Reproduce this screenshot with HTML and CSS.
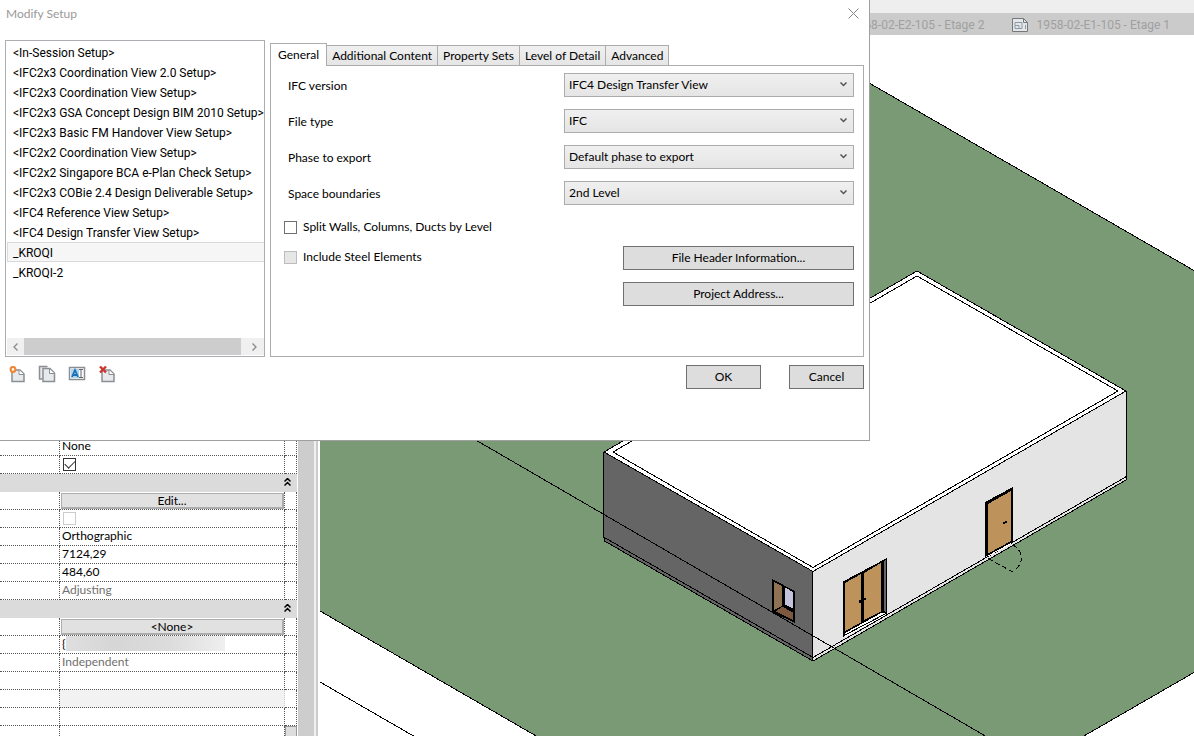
FILE: index.html
```html
<!DOCTYPE html>
<html lang="en">
<head>
  <meta charset="UTF-8">
  <title>Modify Setup</title>
  <link rel="stylesheet" href="styles.css">
</head>
<body>
  <div class="ribbon"></div>

  <nav class="view-tabs">
    <button class="view-tab">
      <svg width="16" height="14" viewBox="0 0 16 14"><path d="M.5.5h11l4 4v9H.5z" fill="#e4e7ea" stroke="#777"/><path d="M11.500.5v4h4" fill="none" stroke="#777"/><path d="M3 4.500h7v6H7v-3H3zM3 7.500v3h4M13.500 7v4" fill="none" stroke="#8d99a5"/></svg>
      <span>1958-02-E2-105 - Etage 2</span>
    </button>
    <button class="view-tab">
      <svg width="16" height="14" viewBox="0 0 16 14"><path d="M.5.5h11l4 4v9H.5z" fill="#e4e7ea" stroke="#777"/><path d="M11.500.5v4h4" fill="none" stroke="#777"/><path d="M3 4.500h7v6H7v-3H3zM3 7.500v3h4M13.500 7v4" fill="none" stroke="#8d99a5"/></svg>
      <span>1958-02-E1-105 - Etage 1</span>
    </button>
  </nav>

  <main class="workspace">
    <aside class="palette">
      <table class="properties">
        <colgroup><col class="col-name"><col class="col-value"><col class="col-more"></colgroup>
        <tr><td></td><td>None</td><td></td></tr>
        <tr><td></td><td><input type="checkbox" class="tick" aria-label="Crop view" checked></td><td></td></tr>
        <tr class="group"><td colspan="3"><svg width="7" height="8" viewBox="0 0 7 8"><path d="M.5 3.500l3-3 3 3M.5 7.500l3-3 3 3" fill="none" stroke="#000" stroke-width="1.500"/></svg></td></tr>
        <tr><td></td><td class="cell-button"><button>Edit...</button></td><td></td></tr>
        <tr><td></td><td><input type="checkbox" class="tick" aria-label="Locked orientation" disabled></td><td></td></tr>
        <tr><td></td><td>Orthographic</td><td></td></tr>
        <tr><td></td><td>7124,29</td><td></td></tr>
        <tr><td></td><td>484,60</td><td></td></tr>
        <tr><td></td><td class="muted">Adjusting</td><td></td></tr>
        <tr class="group"><td colspan="3"><svg width="7" height="8" viewBox="0 0 7 8"><path d="M.5 3.500l3-3 3 3M.5 7.500l3-3 3 3" fill="none" stroke="#000" stroke-width="1.500"/></svg></td></tr>
        <tr><td></td><td class="cell-button"><button>&lt;None&gt;</button></td><td></td></tr>
        <tr><td></td><td><div class="masked">{<span class="smudge"></span></div></td><td></td></tr>
        <tr><td></td><td class="muted">Independent</td><td></td></tr>
        <tr><td></td><td></td><td></td></tr>
        <tr><td></td><td class="cell-smudge"></td><td></td></tr>
        <tr><td></td><td></td><td></td></tr>
        <tr><td></td><td></td><td class="cell-corner"></td></tr>
      </table>
      <div class="gutter"></div>
      <div class="splitter"></div>
    </aside>

    <section class="view">
      <svg class="scene" viewBox="320 35 874 701" preserveAspectRatio="xMinYMin slice" shape-rendering="crispEdges">
        <!-- site -->
        <path d="M320 -235L1200 274V669L1070 744H550L320 611z" fill="#799a75"/>
        <g fill="none" stroke="#000">
          <path d="M786 35L1200 274"/>
          <path d="M320 611L550 744"/>
          <path d="M1070 744L1200 669"/>
          <path d="M320 682L430 745.500"/>
        </g>
        <!-- walls -->
        <path d="M604 452L813 571V661L605 541.500V537H604z" fill="#656565"/>
        <path d="M813 571L1126.500 391V480L813 661z" fill="#e4e4e4"/>
        <path d="M604 452L917 271L1126 391L813 571.500z" fill="#fff" stroke="#000"/>
        <path d="M613 452L917 276L1118 391L813 567.500z" fill="#fff" stroke="#000"/>
        <path d="M603.500 452V537L813 657.500L1126.500 476.500V391M604.500 537V541L813 661L1126 480V477M812.500 571V661" fill="none" stroke="#000"/>
        <!-- window -->
        <path d="M772 579L795 591V623L772 612z" fill="#000"/>
        <path d="M774 582L782 586V606L774 610z" fill="#8f7153"/>
        <path d="M785 587.500L793 592V608.500L785 604.500z" fill="#c3c3de"/>
        <path d="M776 611.500L782 606.500L793 612.500V620z" fill="#7c5840"/>
        <!-- double door -->
        <path d="M843 581.500L887 558V613.500L843 637z" fill="#000"/>
        <path d="M845 583L861 574V622.500L845 631z" fill="#be935b"/>
        <path d="M864 573L881 563V611.500L864 620z" fill="#be935b"/>
        <path d="M883.500 561L885.500 560V612L883.500 611z" fill="#666"/>
        <path d="M845 633L882 612.500L886 613V615L845 637z" fill="#fff"/>
        <path d="M845 635L886 613.500" stroke="#000"/>
        <path d="M859 600h5v3h-5zM862 598h4v2h-4z" fill="#000"/>
        <!-- single door -->
        <path d="M985 502L1013 487V543L985 557z" fill="#000"/>
        <path d="M988 504L1011 491V541L988 553.500z" fill="#be935b"/>
        <path d="M988 556L1011 543.500" stroke="#fff"/>
        <path d="M1003 523L1007 522" stroke="#000" stroke-width="2"/>
        <path d="M988 558.500L1012 571.500Q1022 566 1021.500 557Q1020 549 1013 545" fill="none" stroke="#000" stroke-dasharray="5 3"/>
        <!-- section line -->
        <path d="M400 396L1000 744.500" stroke="#000"/>
      </svg>
    </section>
  </main>

  <form class="dialog" role="dialog" aria-labelledby="dialogTitle">
    <header class="title-bar">
      <h1 id="dialogTitle">Modify Setup</h1>
      <button type="button" class="close" aria-label="Close">
        <svg width="11" height="11" viewBox="0 0 11 11"><path d="M.5.5l10 10M10.500.5l-10 10" stroke="#858585" fill="none"/></svg>
      </button>
    </header>

    <div class="dialog-body">
      <div class="setups">
        <div class="setup-box">
          <ul class="setup-list" role="listbox" aria-label="Setups">
            <li role="option">&lt;In-Session Setup&gt;</li>
            <li role="option">&lt;IFC2x3 Coordination View 2.0 Setup&gt;</li>
            <li role="option">&lt;IFC2x3 Coordination View Setup&gt;</li>
            <li role="option">&lt;IFC2x3 GSA Concept Design BIM 2010 Setup&gt;</li>
            <li role="option">&lt;IFC2x3 Basic FM Handover View Setup&gt;</li>
            <li role="option">&lt;IFC2x2 Coordination View Setup&gt;</li>
            <li role="option">&lt;IFC2x2 Singapore BCA e-Plan Check Setup&gt;</li>
            <li role="option">&lt;IFC2x3 COBie 2.4 Design Deliverable Setup&gt;</li>
            <li role="option">&lt;IFC4 Reference View Setup&gt;</li>
            <li role="option">&lt;IFC4 Design Transfer View Setup&gt;</li>
            <li role="option" class="selected" aria-selected="true">_KROQI</li>
            <li role="option">_KROQI-2</li>
          </ul>
          <div class="scrollbar">
            <button type="button" aria-label="Scroll left"><svg width="5" height="8" viewBox="0 0 5 8"><path d="M4.500.5L1 4l3.500 3.500" fill="none" stroke="#8a8a8a" stroke-width="1.300"/></svg></button>
            <div class="thumb"></div>
            <button type="button" aria-label="Scroll right"><svg width="5" height="8" viewBox="0 0 5 8"><path d="M.5.5L4 4 .5 7.500" fill="none" stroke="#8a8a8a" stroke-width="1.300"/></svg></button>
          </div>
        </div>
        <div class="tools">
          <button type="button" aria-label="New setup">
            <svg width="18" height="18" viewBox="0 0 18 18"><path d="M4 5h8l4 4v7.500H4z" fill="#e8e9ec" stroke="#8b8f94" stroke-width="1.500"/><path d="M11 5v4.500h5" fill="#fff" stroke="#8b8f94"/><circle cx="5" cy="4.500" r="2.400" fill="#fff3d8" stroke="#ee8534" stroke-width="2"/></svg>
          </button>
          <button type="button" aria-label="Duplicate setup">
            <svg width="18" height="18" viewBox="0 0 18 18"><path d="M4.500 14H1.500V1.500h8" fill="#e8e9ec" stroke="#8b8f94" stroke-width="1.500"/><path d="M5 3.500h7l4.500 4.500v8.500H5z" fill="#e8e9ec" stroke="#8b8f94" stroke-width="1.500"/><path d="M11.500 4v4.500h5" fill="#fff" stroke="#8b8f94"/></svg>
          </button>
          <button type="button" aria-label="Rename setup">
            <svg width="18" height="18" viewBox="0 0 18 18"><path d="M1.500 2.500h15v12h-15z" fill="#fff" stroke="#8b8f94" stroke-width="1.500"/><path d="M3 4h8v9H3z" fill="#abd6f0"/><path d="M4 12l3-7 3 7M5 10h4" fill="none" stroke="#1e70b7" stroke-width="1.800"/><path d="M11 4.500h4M11 12.500h4M13 4.500v8" fill="none" stroke="#666"/></svg>
          </button>
          <button type="button" aria-label="Delete setup">
            <svg width="18" height="18" viewBox="0 0 18 18"><path d="M4 5h8l4 4v7.500H4z" fill="#e8e9ec" stroke="#8b8f94" stroke-width="1.500"/><path d="M11 5v4.500h5" fill="#fff" stroke="#8b8f94"/><path d="M2 1.500l6 6M8 1.500l-6 6" stroke="#cb352e" stroke-width="2.400"/></svg>
          </button>
        </div>
      </div>

      <div class="settings">
        <div class="tabs" role="tablist">
          <button type="button" role="tab" class="tab active" aria-selected="true">General</button>
          <button type="button" role="tab" class="tab">Additional Content</button>
          <button type="button" role="tab" class="tab">Property Sets</button>
          <button type="button" role="tab" class="tab">Level of Detail</button>
          <button type="button" role="tab" class="tab">Advanced</button>
        </div>

        <div class="tab-page">
          <div class="field">
            <label for="ifcVersion">IFC version</label>
            <div class="select">
              <select id="ifcVersion"><option>IFC4 Design Transfer View</option></select>
              <svg width="7" height="5" viewBox="0 0 7 5"><path d="M.5.5l3 3 3-3" fill="none" stroke="#555" stroke-width="1.500"/></svg>
            </div>
          </div>
          <div class="field">
            <label for="fileType">File type</label>
            <div class="select">
              <select id="fileType"><option>IFC</option></select>
              <svg width="7" height="5" viewBox="0 0 7 5"><path d="M.5.5l3 3 3-3" fill="none" stroke="#555" stroke-width="1.500"/></svg>
            </div>
          </div>
          <div class="field">
            <label for="phase">Phase to export</label>
            <div class="select">
              <select id="phase"><option>Default phase to export</option></select>
              <svg width="7" height="5" viewBox="0 0 7 5"><path d="M.5.5l3 3 3-3" fill="none" stroke="#555" stroke-width="1.500"/></svg>
            </div>
          </div>
          <div class="field">
            <label for="boundaries">Space boundaries</label>
            <div class="select">
              <select id="boundaries"><option>2nd Level</option></select>
              <svg width="7" height="5" viewBox="0 0 7 5"><path d="M.5.5l3 3 3-3" fill="none" stroke="#555" stroke-width="1.500"/></svg>
            </div>
          </div>

          <div class="options">
            <div class="checks">
              <label class="check"><input type="checkbox">Split Walls, Columns, Ducts by Level</label>
              <label class="check"><input type="checkbox" disabled>Include Steel Elements</label>
            </div>
            <div class="links">
              <button type="button" class="button">File Header Information...</button>
              <button type="button" class="button">Project Address...</button>
            </div>
          </div>
        </div>

        <div class="actions">
          <button type="submit" class="button">OK</button>
          <button type="button" class="button">Cancel</button>
        </div>
      </div>
    </div>
  </form>
</body>
</html>
```
FILE: styles.css
```css
* {
  box-sizing: border-box;
}

body {
  margin: 0;
  height: 100vh;
  display: flex;
  flex-direction: column;
  overflow: hidden;
  position: relative;
  background: #fff;
  color: #000;
  font-family: "Segoe UI", Lato, sans-serif;
  font-size: 12px;
  line-height: 16px;
}

button,
select,
input {
  font: inherit;
  color: inherit;
  margin: 0;
}

button {
  padding: 0;
  border: none;
  background: none;
}

svg {
  display: block;
}

/* application behind the dialog */
.ribbon {
  height: 13px;
  background: #eee;
}

.view-tabs {
  height: 22px;
  flex: none;
  display: flex;
  justify-content: flex-end;
  gap: 28px;
  padding: 2px 24px 0 0;
  background: #cbcbcb;
  font-family: "Segoe UI", Roboto, sans-serif;
}

.view-tab {
  display: flex;
  align-items: center;
  gap: 8px;
  color: #a0a0a0;
  white-space: nowrap;
}

.workspace {
  flex: 1;
  min-height: 0;
  display: flex;
}

.palette {
  display: flex;
  flex: none;
  width: 320px;
  overflow: hidden;
}

.properties {
  width: 297px;
  margin-top: 403px;
  table-layout: fixed;
  border-spacing: 0;
  align-self: flex-start;
}

.col-name {
  width: 60px;
}

.col-more {
  width: 12px;
}

.properties td {
  height: 18px;
  padding: 0 2px 2px;
  border-right: 1px dotted #555;
  border-bottom: 1px dotted #555;
  line-height: 14px;
  vertical-align: middle;
}

.properties .group td {
  background: #dbdbdb;
  border: none;
}

.group svg {
  margin-left: auto;
  margin-right: 4px;
}

.properties .muted {
  color: #707070;
}

.properties .cell-button {
  padding: 0 0 0 1px;
}

.cell-button button {
  display: block;
  width: 100%;
  height: 16px;
  line-height: 13px;
  background: #e1e1e1;
  border: 1px solid #adadad;
  border-right-width: 2px;
  border-bottom-width: 2px;
}

.tick {
  appearance: none;
  display: block;
  width: 13px;
  height: 13px;
  margin: 2px 0 0 1px;
  border: 1px solid #333;
  background: #fff;
}

.tick:checked::before {
  content: "";
  display: block;
  width: 9px;
  height: 5px;
  margin: 1px;
  border-left: 1px solid #333;
  border-bottom: 1px solid #333;
  transform: rotate(-45deg);
}

.tick:disabled {
  border-color: #ccc;
}

.masked {
  display: flex;
  align-items: center;
}

.smudge {
  width: 159px;
  height: 15px;
  background: linear-gradient(90deg, #dfdfdf, #d6d6d6 30%, #dcdcdc 65%, #efefef);
}

.properties .cell-smudge {
  background: #f2f2f2;
  border-right-color: #ccc;
}

.properties .cell-corner {
  background: #ddd;
  border: 1px solid #999;
}

.gutter {
  width: 16px;
  margin-left: 1px;
  background: #cdcdcd;
}

.splitter {
  width: 4px;
  background: #f0f0f0;
  border-right: 2px solid #ccc;
}

.view {
  flex: 1;
  min-width: 0;
}

.scene {
  width: 100%;
  height: 100%;
}

/* dialog */
.dialog {
  position: absolute;
  top: 0;
  left: 0;
  width: calc(100% - 324px);
  padding: 0 5px 49px;
  background: #fff;
  border-right: 1px solid #a0a0a0;
  border-bottom: 1px solid #a0a0a0;
}

.title-bar {
  display: flex;
  align-items: center;
  justify-content: space-between;
  height: 28px;
  padding: 0 5px 1px 1px;
}

.title-bar h1 {
  margin: 0;
  font-size: 12px;
  font-weight: normal;
  color: #999;
}

.dialog-body {
  display: flex;
  gap: 5px;
  padding-top: 12px;
}

.setups {
  width: 260px;
  flex: none;
  font-family: "Segoe UI", Roboto, sans-serif;
}

.setup-box {
  display: flex;
  flex-direction: column;
  height: 317px;
  padding: 1px 0 1px 1px;
  border: 1px solid #abadb3;
}

.setup-list {
  flex: 1;
  margin: 0;
  padding: 0;
  list-style: none;
  overflow: hidden;
}

.setup-list li {
  height: 20px;
  padding: 2px 5px 0;
  border: 1px solid transparent;
  white-space: nowrap;
}

.setup-list .selected {
  background: #f6f6f6;
  border-color: #dadada;
  border-right: none;
}

.scrollbar {
  display: flex;
  height: 17px;
  padding-right: 1px;
  background: #f0f0f0;
}

.scrollbar button {
  display: grid;
  place-items: center;
  width: 17px;
}

.scrollbar .thumb {
  flex: 1;
  margin-right: 5px;
  background: #cdcdcd;
}

.tools {
  display: flex;
  gap: 12px;
  padding: 8px 3px;
}

.settings {
  flex: 1;
  min-width: 0;
}

.tabs {
  display: flex;
  align-items: flex-end;
  height: 25px;
  padding-top: 3px;
}

.tab {
  height: 20px;
  padding: 0 5px;
  background: linear-gradient(#f0f0f0, #e5e5e5);
  border: 1px solid #acacac;
  border-bottom: none;
  white-space: nowrap;
}

.tab + .tab {
  margin-left: -1px;
}

.tab.active {
  position: relative;
  height: 23px;
  margin-bottom: -1px;
  padding: 0 7px;
  background: #fff;
}

.tab.active + .tab {
  margin-left: 0;
  border-left: none;
}

.tab-page {
  display: flex;
  flex-direction: column;
  gap: 12px;
  height: 292px;
  padding: 7px 9px 0 13px;
  border: 1px solid #acacac;
}

.field {
  display: flex;
  align-items: center;
  justify-content: space-between;
  padding-left: 4px;
}

.field label {
  padding-top: 2px;
}

.select {
  position: relative;
  width: 290px;
}

.select select {
  appearance: none;
  display: block;
  width: 100%;
  height: 24px;
  padding: 0 20px 0 4px;
  background: linear-gradient(#f0f0f0, #e5e5e5);
  border: 1px solid #acacac;
  border-radius: 0;
}

.select svg {
  position: absolute;
  top: 9px;
  right: 7px;
  pointer-events: none;
}

.options {
  display: flex;
  justify-content: space-between;
}

.checks {
  display: flex;
  flex-direction: column;
  gap: 14px;
  padding-top: 2px;
}

.check {
  display: flex;
  align-items: center;
  gap: 6px;
}

.check input {
  appearance: none;
  width: 13px;
  height: 13px;
  border: 1px solid #707070;
  background: #fff;
}

.check input:disabled {
  border-color: #bcbcbc;
  background: #e6e6e6;
}

.links {
  display: flex;
  flex-direction: column;
  gap: 12px;
  width: 231px;
  padding-top: 29px;
}

.button {
  height: 24px;
  background: #ddd;
  border: 1px solid #707070;
}

.actions {
  display: flex;
  justify-content: flex-end;
  gap: 28px;
  padding-top: 8px;
}

.actions .button {
  width: 75px;
}
```
